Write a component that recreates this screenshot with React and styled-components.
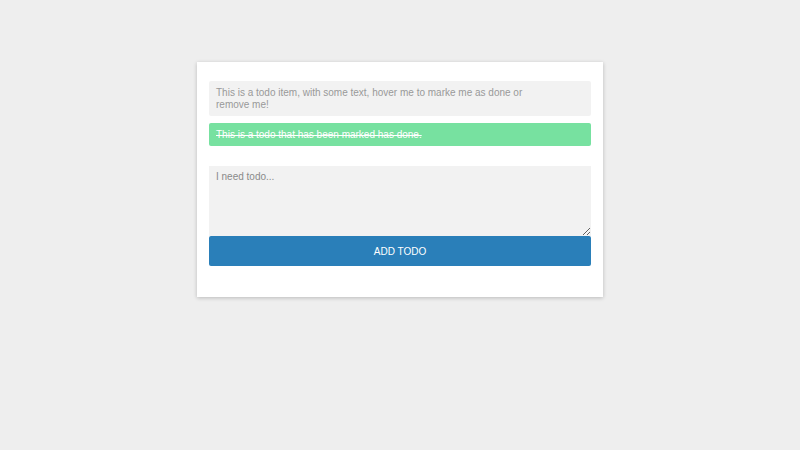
import React from 'react';
import styled, { createGlobalStyle } from 'styled-components';

const GlobalStyle = createGlobalStyle`
    html, body {
        margin: 0;
        padding: 0;
        background: #eeeeee;
        font-family: "Liberation Sans", Arial, sans-serif;
    }
`

const Page = styled.div`
    display: flex;
    justify-content: center;
    align-items: flex-start;
    padding-top: 62px;
    min-height: 450px;
    box-sizing: border-box;
`

const Card = styled.div`
    width: 406px;
    box-sizing: border-box;
    background: #ffffff;
    box-shadow: 0 1px 4px rgba(0, 0, 0, 0.22);
    padding: 19px 12px 31px;
`

const List = styled.ul`
    list-style: none;
    margin: 0;
    padding: 0;
    display: flex;
    flex-direction: column;
    gap: 7px;
`

const Item = styled.li`
    box-sizing: border-box;
    padding: 6px 50px 5px 7px;
    border-radius: 2px;
    font-size: 10px;
    line-height: 12px;
    background: ${p => (p.done ? '#77e1a0' : '#f2f2f2')};
    color: ${p => (p.done ? '#ffffff' : '#999999')};
    text-decoration: ${p => (p.done ? 'line-through' : 'none')};
`

const Form = styled.form`
    display: flex;
    flex-direction: column;
    margin-top: 20px;
`

const TextArea = styled.textarea`
    box-sizing: border-box;
    height: 70px;
    width: 100%;
    border: none;
    outline: none;
    margin: 0;
    background: #f2f2f2;
    padding: 5px 7px;
    font-family: "Liberation Sans", Arial, sans-serif;
    font-size: 10px;
    line-height: 12px;
    color: #777777;
    display: block;

    &::placeholder {
        color: #8a8a8a;
    }
`

const Button = styled.button`
    height: 30px;
    border: none;
    border-radius: 2px;
    background: #2a7fb9;
    color: #ffffff;
    font-family: "Liberation Sans", Arial, sans-serif;
    font-size: 10px;
    text-transform: uppercase;
    cursor: pointer;
`

export default function App() {
    return (
        <>
            <GlobalStyle />
            <Page>
                <Card>
                    <List>
                        <Item>This is a todo item, with some text, hover me to marke me as done or remove me!</Item>
                        <Item done>This is a todo that has been marked has done.</Item>
                    </List>
                    <Form onSubmit={e => e.preventDefault()}>
                        <TextArea placeholder="I need todo..." />
                        <Button type="submit">Add todo</Button>
                    </Form>
                </Card>
            </Page>
        </>
    );
}
